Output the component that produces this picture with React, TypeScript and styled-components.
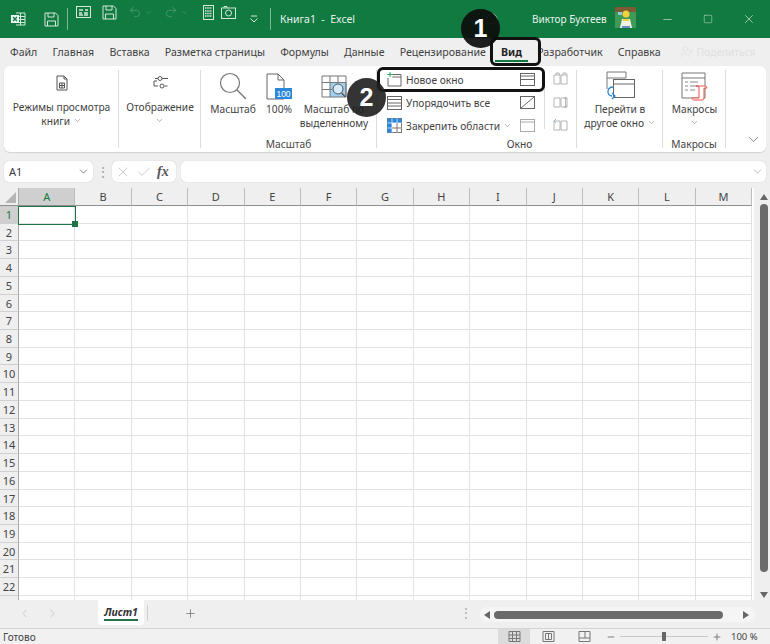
import React from 'react';
import styled, { createGlobalStyle } from 'styled-components';
import { ChevronDown, ChevronLeft, ChevronRight, Check, Minus, Plus, Redo2, Search, Square, Undo2, UserPlus, X } from 'lucide-react';

const GlobalStyle = createGlobalStyle`
  html, body { margin: 0; padding: 0; background: #fff; }
  body { font-family: "Noto Sans", "Open Sans", sans-serif; color: #3a3a3a; }
`;

const GREEN = '#107a41';
const COLUMNS = ['A', 'B', 'C', 'D', 'E', 'F', 'G', 'H', 'I', 'J', 'K', 'L', 'M'];
const ROWS = Array.from({ length: 23 }, (_, i) => i + 1);
const LAST_LABELLED_ROW = 22;
const TABS = ['Файл', 'Главная', 'Вставка', 'Разметка страницы', 'Формулы', 'Данные', 'Рецензирование', 'Вид', 'Разработчик', 'Справка'];

const TitleIcon: React.FC<{ left: number; raised?: boolean; children: React.ReactNode }> = ({ left, raised, children }) => (
  <TitleSlot $left={left} $raised={raised}>{children}</TitleSlot>
);

const Stroke: React.FC<{ size: number; h?: number; color?: string; children: React.ReactNode }> = ({ size, h, color = '#555', children }) => (
  <svg width={size} height={h ?? size} viewBox={`0 0 ${size} ${h ?? size}`} fill="none" stroke={color} strokeWidth="1">
    {children}
  </svg>
);

const SaveIcon = () => (
  <Stroke size={15} color="#d5e8dc">
    <path d="M1 1h10.500l2.500 2.500V14H1z" />
    <path d="M4 1v4h6V1M3.500 14V9h8v5" />
  </Stroke>
);

const PageIcon = () => (
  <Stroke size={16}>
    <path d="M3 1h7l3 3v11H3z" />
    <path d="M10 1v3h3M5.500 8h5v5h-5zM5.500 10.500h5M8 8v5" />
  </Stroke>
);

const SlidersIcon = () => (
  <Stroke size={17}>
    <circle cx="8" cy="3.500" r="2" />
    <path d="M10 3.500h6M3 3.500h3M2 6v5h4M2 6h3" />
    <circle cx="10" cy="11" r="2" />
    <path d="M12.500 11h3" />
  </Stroke>
);

const ZoomIcon = () => (
  <Stroke size={28} color="#777">
    <circle cx="11" cy="11" r="9.500" strokeWidth="1.200" />
    <path d="M18 18l9 9" strokeWidth="1.400" />
  </Stroke>
);

const HundredIcon = () => (
  <svg width="26" height="27" viewBox="0 0 26 27" fill="none">
    <path d="M1 1h11l6 6v19H1z" stroke="#666" fill="#fff" />
    <path d="M12 1v6h6" stroke="#666" />
    <rect x="9" y="15" width="17" height="11" fill="#2b88d8" />
    <text x="17.500" y="24" fontSize="8.500" fill="#fff" textAnchor="middle" fontFamily="Liberation Sans, sans-serif">100</text>
  </svg>
);

const SelectionZoomIcon = () => (
  <svg width="26" height="23" viewBox="0 0 26 23" fill="none">
    <rect x="9" y="7" width="16" height="15" fill="#9fd0f2" />
    <path d="M1 1h24v21H1zM1 7.500h24M1 14.500h10M9 1v21M17 1v6M25 7v15" stroke="#777" />
    <circle cx="17" cy="14" r="5" stroke="#555" fill="#d6ecfa" />
    <path d="M20.500 18l4 4" stroke="#555" strokeWidth="1.400" />
  </svg>
);

const NewWindowIcon = () => (
  <Stroke size={15} color="#666">
    <path d="M5.500 2.500H14V14H1V6" />
    <path d="M5.500 5H14" />
    <path d="M3 0v5M.5 2.500h5" stroke="#22a35a" />
  </Stroke>
);

const ArrangeIcon = () => (
  <Stroke size={15} color="#666">
    <rect x=".5" y="1.500" width="14" height="13" />
    <path d="M.5 4.500h14M.5 8h14M.5 11h14" />
  </Stroke>
);

const FreezeIcon = () => (
  <svg width="15" height="15" viewBox="0 0 15 15" fill="none">
    <rect x=".5" y=".5" width="14" height="14" stroke="#777" />
    <rect x=".5" y=".5" width="14" height="4.500" fill="#2b88d8" />
    <rect x=".5" y="5" width="4.500" height="9.500" fill="#2b88d8" />
    <path d="M.5 5h14M.5 10h14M5 .5v14M10 .5v14" stroke="#fff" strokeWidth=".7" />
    <path d="M10 5v9.500M5 10h9.500" stroke="#777" />
  </svg>
);

const SplitIcon = () => (
  <Stroke size={15} color="#666">
    <rect x=".5" y="1.500" width="14" height="12" />
    <path d="M.5 7.500h14M.5 4h14" />
  </Stroke>
);

const HideIcon = () => (
  <Stroke size={15} color="#666">
    <rect x=".5" y="1.500" width="14" height="12" />
    <path d="M1 13l13-11" />
  </Stroke>
);

const UnhideIcon = () => (
  <Stroke size={15} color="#aaa">
    <rect x=".5" y="1.500" width="14" height="12" />
    <path d="M.5 4h14" />
  </Stroke>
);

const CompareIcon = ({ variant }: { variant: number }) => (
  <Stroke size={15} color="#b5b5b5">
    <path d="M1 3h6v9H1zM8 3h6v9H8z" />
    {variant === 1 && <path d="M3 3V1h3l1 2M10 3V1h3l1 2" />}
    {variant === 2 && <path d="M12.500 2v11M11 4l1.500-2L14 4M11 11l1.500 2 1.500-2" />}
    {variant === 3 && <path d="M3 1L1 3l2 2" stroke="#8fb5d0" />}
  </Stroke>
);

const SwitchWindowIcon = () => (
  <svg width="32" height="30" viewBox="0 0 32 30" fill="none">
    <path d="M3 1h19v6H3zM3 7v11" stroke="#777" />
    <rect x="9.500" y="8.500" width="21" height="18" stroke="#666" fill="#fff" />
    <path d="M9.500 13h21" stroke="#666" />
    <path d="M9 16c-6 0-7 8-1 9" stroke="#2b88d8" strokeWidth="1.300" />
    <path d="M8 22l3 3-3 3" stroke="#2b88d8" strokeWidth="1.300" />
  </svg>
);

const MacroIcon = () => (
  <svg width="27" height="29" viewBox="0 0 27 29" fill="none">
    <path d="M1 1h23v25H1zM1 6h23" stroke="#777" />
    <path d="M4 10h3M9 10h8M4 14h3M9 14h8M4 18h3M9 18h5" stroke="#8a8a8a" />
    <path d="M15 14h9a2 2 0 0 1 2 2h-3v10a2 2 0 0 1-2 2h-8c-1 0-2-1-2-2h7V15z" stroke="#e8534a" fill="#fff" />
  </svg>
);

const Avatar = () => (
  <svg width="21" height="21" viewBox="0 0 21 21">
    <rect width="21" height="21" fill="#3f9a58" />
    <rect width="21" height="5" fill="#7d5a35" />
    <rect x="3" y="5" width="4" height="3" fill="#8fc7e0" />
    <circle cx="11" cy="7" r="3.500" fill="#f2d23c" />
    <path d="M5 21l2-9h8l2 9z" fill="#f3f1e4" />
    <path d="M8 12h6v2H8z" fill="#f2d23c" />
    <path d="M7 19h8v2H7z" fill="#6b8fc4" />
  </svg>
);

const TriBox = () => (
  <svg width="11" height="11" viewBox="0 0 11 11"><path d="M11 0v11H0z" fill="#b5b5b5" /></svg>
);

const Caret = ({ size = 9 }: { size?: number }) => <ChevronDown size={size} color="#777" strokeWidth={1.500} />;

export default function App() {
  return (
    <Page>
      <GlobalStyle />

      <TitleBar>
        <TitleIcon left={10}>
          <svg width="16" height="16" viewBox="0 0 16 16" fill="none">
            <path d="M6 2h9v12H6" stroke="#d5e8dc" />
            <path d="M6 5.500h9M6 8.500h9M6 11.500h9M10.500 2v12" stroke="#d5e8dc" />
            <rect x="1" y="4" width="8" height="8" fill="#eef6f1" />
            <path d="M3 6l4 4M7 6l-4 4" stroke={GREEN} strokeWidth="1.300" />
          </svg>
        </TitleIcon>
        <TitleIcon left={18}><SaveIcon /></TitleIcon>
        <TitleDivider $left={8} />
        <TitleIcon left={8} raised>
          <Stroke size={15} color="#d5e8dc">
            <rect x=".5" y="1.500" width="14" height="11" />
            <path d="M3 5h4M9 5h3M3 8h3M8 8h4M3 10h4M8 10h4" strokeWidth="1.300" />
          </Stroke>
        </TitleIcon>
        <TitleIcon left={11} raised><SaveIcon /></TitleIcon>
        <TitleIcon left={11} raised><Undo2 size={14} color="#5d9f7c" strokeWidth={1.200} /></TitleIcon>
        <MiniCaret><ChevronDown size={7} color="#5d9f7c" /></MiniCaret>
        <TitleIcon left={12} raised><Redo2 size={14} color="#5d9f7c" strokeWidth={1.200} /></TitleIcon>
        <MiniCaret><ChevronDown size={7} color="#5d9f7c" /></MiniCaret>
        <TitleIcon left={15} raised>
          <Stroke size={11} h={15} color="#d5e8dc">
            <rect x=".5" y=".5" width="10" height="14" />
            <path d="M2 3h7M2 6h7M2 8.500h7M2 11h7" strokeWidth="1.300" strokeDasharray="1.500 .7" />
          </Stroke>
        </TitleIcon>
        <TitleIcon left={7} raised>
          <Stroke size={15} h={13} color="#d5e8dc">
            <rect x=".5" y="2" width="14" height="10.500" />
            <path d="M3 2V.5h3V2" />
            <circle cx="7.500" cy="7" r="3" />
          </Stroke>
        </TitleIcon>
        <TitleIcon left={13}>
          <Stroke size={10} h={8} color="#d5e8dc"><path d="M2 1h6M1.500 3.500L5 7l3.500-3.500" /></Stroke>
        </TitleIcon>
        <TitleDivider $left={11} />
        <DocTitle>Книга1&nbsp; -&nbsp; Excel</DocTitle>
        <TitleSearch><Search size={15} color="#d5e8dc" strokeWidth={1.200} /></TitleSearch>
        <UserName>Виктор Бухтеев</UserName>
        <AvatarSlot><Avatar /></AvatarSlot>
        <WindowButton><Minus size={13} color="#e4f0e9" strokeWidth={1.100} /></WindowButton>
        <WindowButton><Square size={10} color="#e4f0e9" strokeWidth={1.100} /></WindowButton>
        <WindowButton><X size={14} color="#e4f0e9" strokeWidth={1.100} /></WindowButton>
      </TitleBar>

      <MenuBar>
        {TABS.map((tab) => (
          <MenuTab key={tab} $active={tab === 'Вид'}>{tab}</MenuTab>
        ))}
        <ShareButton><UserPlus size={14} strokeWidth={1.100} />Поделиться</ShareButton>
      </MenuBar>

      <Ribbon>
        <Group $width={115}>
          <GroupBody>
            <BigButton $width={115}>
              <IconBox $height={26} $below={4}><PageIcon /></IconBox>
              <BigLabel>Режимы просмотра<br />книги <Caret /></BigLabel>
            </BigButton>
          </GroupBody>
        </Group>
        <Group $width={82}>
          <GroupBody>
            <BigButton $width={82}>
              <IconBox $height={26} $below={4}><SlidersIcon /></IconBox>
              <BigLabel>Отображение<br /><Caret /></BigLabel>
            </BigButton>
          </GroupBody>
        </Group>
        <Group $width={176}>
          <GroupBody>
            <BigButton $width={64}>
              <IconBox $height={32}><ZoomIcon /></IconBox>
              <BigLabel>Масштаб</BigLabel>
            </BigButton>
            <BigButton $width={28}>
              <IconBox $height={32}><HundredIcon /></IconBox>
              <BigLabel>100%</BigLabel>
            </BigButton>
            <BigButton $width={82}>
              <IconBox $height={32}><SelectionZoomIcon /></IconBox>
              <BigLabel>Масштаб по<br />выделенному</BigLabel>
            </BigButton>
          </GroupBody>
          <GroupLabel>Масштаб</GroupLabel>
        </Group>
        <Group $width={200}>
          <GroupBody>
            <WindowList>
              <WindowRow><NewWindowIcon /><RowText>Новое окно</RowText><RowSide><SplitIcon /></RowSide></WindowRow>
              <WindowRow><ArrangeIcon /><RowText>Упорядочить все</RowText><RowSide><HideIcon /></RowSide></WindowRow>
              <WindowRow><FreezeIcon /><RowText>Закрепить области <Caret /></RowText><RowSide><UnhideIcon /></RowSide></WindowRow>
            </WindowList>
            <CompareColumn>
              <CompareIcon variant={1} />
              <CompareIcon variant={2} />
              <CompareIcon variant={3} />
            </CompareColumn>
          </GroupBody>
          <GroupLabel $shift={86}>Окно</GroupLabel>
        </Group>
        <Group $width={86}>
          <GroupBody>
            <BigButton $width={86}>
              <IconBox $height={32}><SwitchWindowIcon /></IconBox>
              <BigLabel>Перейти в<br />другое окно <Caret /></BigLabel>
            </BigButton>
          </GroupBody>
        </Group>
        <Group $width={63}>
          <GroupBody>
            <BigButton $width={63}>
              <IconBox $height={32}><MacroIcon /></IconBox>
              <BigLabel>Макросы<br /><Caret /></BigLabel>
            </BigButton>
          </GroupBody>
          <GroupLabel>Макросы</GroupLabel>
        </Group>
        <Collapse><ChevronDown size={17} color="#666" strokeWidth={1.100} /></Collapse>
      </Ribbon>

      <FormulaBar>
        <NameBox>A1<ChevronDown size={13} color="#666" strokeWidth={1.500} /></NameBox>
        <Grip>⋮</Grip>
        <FormulaTools>
          <X size={16} color="#c2c2c2" strokeWidth={1.200} />
          <Check size={16} color="#c2c2c2" strokeWidth={1.200} />
          <FxMark>fx</FxMark>
        </FormulaTools>
        <FormulaInput><ChevronDown size={13} color="#aaa" strokeWidth={1.500} /></FormulaInput>
      </FormulaBar>

      <SheetArea>
        <Sheet>
          <Corner><TriBox /></Corner>
          {COLUMNS.map((col) => (
            <ColHead key={col} $selected={col === 'A'}>{col}</ColHead>
          ))}
          {ROWS.map((row) => (
            <React.Fragment key={row}>
              <RowHead $selected={row === 1}>{row <= LAST_LABELLED_ROW ? row : ''}</RowHead>
              {COLUMNS.map((col) => (
                <Cell key={col} />
              ))}
            </React.Fragment>
          ))}
          <ActiveCell />
        </Sheet>
        <VScroll>
          <ScrollArrowUp />
          <VThumb />
          <ScrollArrowDown />
        </VScroll>
      </SheetArea>

      <TabsBar>
        <NavArrows>
          <ChevronLeft size={13} color="#bbb" strokeWidth={1.300} />
          <ChevronRight size={13} color="#bbb" strokeWidth={1.300} />
        </NavArrows>
        <SheetTab><SheetName>Лист1</SheetName></SheetTab>
        <TabDivider />
        <AddSheet><Plus size={13} color="#666" strokeWidth={1.300} /></AddSheet>
        <TabGrip>⋮</TabGrip>
        <HScroll>
          <HArrowLeft />
          <HThumb />
          <HArrowRight />
        </HScroll>
      </TabsBar>

      <StatusBar>
        <StatusText>Готово</StatusText>
        <ViewButton $active>
          <Stroke size={13} color="#777"><path d="M1 1.500h11v10H1zM1 5h11M1 8.500h11M4.500 1.500v10M8.500 1.500v10" /></Stroke>
        </ViewButton>
        <ViewButton>
          <Stroke size={13} color="#777"><path d="M1 1.500h11v10H1z" /><path d="M3.500 3.500h6v6h-6zM6.500 3.500v6" /></Stroke>
        </ViewButton>
        <ViewButton>
          <Stroke size={13} color="#777"><path d="M1 1.500h11v10H1zM1 8h6V1.500M7 8h5" /></Stroke>
        </ViewButton>
        <ZoomControls>
          <Minus size={10} color="#666" />
          <ZoomTrack><ZoomThumb /></ZoomTrack>
          <Plus size={10} color="#666" />
        </ZoomControls>
        <ZoomValue>100 %</ZoomValue>
      </StatusBar>

      <CalloutBox $x={490} $y={37} $w={51} $h={29} />
      <CalloutBox $x={377} $y={67} $w={168} $h={25} />
      <Badge $x={461} $y={9} $tone="rgba(12, 12, 12, 0.92)">1</Badge>
      <Badge $x={347} $y={78} $tone="rgba(30, 30, 30, 0.9)">2</Badge>
    </Page>
  );
}

const Page = styled.div`
  position: relative;
  width: 770px;
  height: 644px;
  overflow: hidden;
  display: flex;
  flex-direction: column;
  background: #efefef;
`;

const TitleBar = styled.header`
  height: 38px;
  flex: none;
  background: ${GREEN};
  display: flex;
  align-items: center;
  color: #e8f2ec;
  font-size: 10.5px;
`;

const TitleSlot = styled.span<{ $left: number; $raised?: boolean }>`
  display: flex;
  margin-left: ${(p) => p.$left}px;
  margin-bottom: ${(p) => (p.$raised ? 14 : 0)}px;
`;

const MiniCaret = styled.span`
  display: flex;
  margin: 0 0 14px 3px;
`;

const TitleDivider = styled.span<{ $left: number }>`
  width: 1px;
  height: 22px;
  margin-left: ${(p) => p.$left}px;
  background: #7fb59a;
`;

const DocTitle = styled.span`
  width: 72px;
  flex: none;
  margin-left: 9px;
  white-space: nowrap;
`;

const TitleSearch = styled.span`
  display: flex;
  margin-left: 133px;
`;

const UserName = styled.span`
  width: 74px;
  flex: none;
  margin-left: 32px;
  font-size: 10px;
  white-space: nowrap;
`;

const AvatarSlot = styled.span`
  display: flex;
  margin-left: 9px;
  margin-bottom: 3px;
`;

const WindowButton = styled.span`
  width: 42px;
  display: flex;
  justify-content: center;
  &:nth-last-child(3) { margin-left: 11px; }
`;

const MenuBar = styled.nav`
  height: 28px;
  flex: none;
  display: flex;
  align-items: center;
  gap: 15.2px;
  padding-left: 10px;
  font-size: 10.6px;
`;

const MenuTab = styled.span<{ $active?: boolean }>`
  position: relative;
  white-space: nowrap;
  font-weight: ${(p) => (p.$active ? 700 : 400)};
  color: ${(p) => (p.$active ? '#222' : '#3f3f3f')};
  &::after {
    content: '';
    display: ${(p) => (p.$active ? 'block' : 'none')};
    position: absolute;
    left: -6px;
    right: -6px;
    bottom: -3px;
    height: 2px;
    background: ${GREEN};
  }
`;

const ShareButton = styled.span`
  display: flex;
  align-items: center;
  gap: 3px;
  margin-left: 4px;
  color: #dfdfdf;
  white-space: nowrap;
  font-size: 10.2px;
`;

const Ribbon = styled.section`
  height: 86px;
  flex: none;
  margin: 0 4px;
  padding: 4px 0;
  box-sizing: border-box;
  background: #fff;
  border-radius: 6px;
  box-shadow: 0 1px 1px rgba(0, 0, 0, 0.12);
  display: flex;
`;

const Group = styled.div<{ $width: number }>`
  width: ${(p) => p.$width}px;
  flex: none;
  box-sizing: border-box;
  border-right: 1px solid #dcdcdc;
  display: flex;
  flex-direction: column;
  align-items: center;
`;

const GroupBody = styled.div`
  flex: 1;
  width: 100%;
  display: flex;
  min-height: 0;
`;

const GroupLabel = styled.div<{ $shift?: number }>`
  font-size: 10.2px;
  line-height: 14px;
  height: 14px;
  margin-bottom: -3px;
  padding-left: ${(p) => p.$shift ?? 0}px;
  color: #444;
`;

const BigButton = styled.div<{ $width: number }>`
  width: ${(p) => p.$width}px;
  flex: none;
  display: flex;
  flex-direction: column;
  align-items: center;
`;

const IconBox = styled.div<{ $height: number; $below?: number }>`
  height: ${(p) => p.$height}px;
  margin-bottom: ${(p) => p.$below ?? 0}px;
  display: flex;
  align-items: center;
  justify-content: center;
  flex: none;
`;

const BigLabel = styled.div`
  font-size: 10.2px;
  line-height: 14px;
  text-align: center;
  white-space: nowrap;
  color: #3f3f3f;
`;

const WindowList = styled.div`
  width: 168px;
  flex: none;
  display: flex;
  flex-direction: column;
  gap: 8px;
  padding: 2px 0 0 10px;
  box-sizing: border-box;
  border-right: 1px solid #dcdcdc;
  margin-bottom: 8px;
`;

const WindowRow = styled.div`
  height: 16px;
  display: flex;
  align-items: center;
  font-size: 10.2px;
  color: #3f3f3f;
`;

const RowText = styled.span`
  margin-left: 4px;
  flex: 1;
  white-space: nowrap;
`;

const RowSide = styled.span`
  display: flex;
  margin-right: 9px;
`;

const CompareColumn = styled.div`
  display: flex;
  flex-direction: column;
  gap: 8px;
  padding: 2px 0 0 8px;
`;

const Collapse = styled.div`
  flex: 1;
  display: flex;
  align-items: flex-end;
  justify-content: flex-end;
  padding-right: 4px;
`;

const FormulaBar = styled.div`
  height: 36px;
  flex: none;
  display: flex;
  align-items: center;
  padding: 3px 4px 0;
  box-sizing: border-box;
`;

const WhiteBox = styled.div`
  height: 21px;
  background: #fff;
  border-radius: 5px;
  box-shadow: 0 0 1px rgba(0, 0, 0, 0.25);
  display: flex;
  align-items: center;
`;

const NameBox = styled(WhiteBox)`
  width: 89px;
  flex: none;
  box-sizing: border-box;
  padding: 0 3px 0 5px;
  justify-content: space-between;
  font-size: 11px;
`;

const Grip = styled.span`
  width: 19px;
  flex: none;
  text-align: center;
  color: #999;
  font-size: 12px;
`;

const FormulaTools = styled(WhiteBox)`
  width: 64px;
  flex: none;
  box-sizing: border-box;
  padding-left: 3px;
  gap: 5px;
`;

const FxMark = styled.span`
  font-family: "Liberation Serif", serif;
  font-style: italic;
  font-weight: 700;
  font-size: 14px;
  color: #555;
`;

const FormulaInput = styled(WhiteBox)`
  flex: 1;
  margin-left: 5px;
  justify-content: flex-end;
  padding-right: 2px;
`;

const SheetArea = styled.div`
  height: 412px;
  flex: none;
  display: flex;
  overflow: hidden;
`;

const Sheet = styled.div`
  position: relative;
  width: 754px;
  flex: none;
  display: grid;
  grid-template-columns: 19px repeat(13, 56.4px);
  grid-template-rows: 18px;
  grid-auto-rows: 17.72px;
  align-content: start;
  background: #fff;
  overflow: hidden;
`;

const Corner = styled.div`
  background: #efefef;
  border-right: 1px solid #a8a8a8;
  border-bottom: 1px solid #8f8f8f;
  box-sizing: border-box;
  display: flex;
  align-items: flex-end;
  justify-content: flex-end;
  padding: 0 2px 2px 0;
`;

const ColHead = styled.div<{ $selected?: boolean }>`
  background: ${(p) => (p.$selected ? '#cfcfcf' : '#efefef')};
  color: ${(p) => (p.$selected ? GREEN : '#444')};
  border-right: 1px solid #bdbdbd;
  border-bottom: 1px solid #8f8f8f;
  box-sizing: border-box;
  font-size: 11px;
  line-height: 17px;
  text-align: center;
`;

const RowHead = styled.div<{ $selected?: boolean }>`
  background: ${(p) => (p.$selected ? '#cfcfcf' : '#efefef')};
  color: ${(p) => (p.$selected ? GREEN : '#444')};
  border-right: 1px solid #a8a8a8;
  border-bottom: 1px solid #d0d0d0;
  box-sizing: border-box;
  font-size: 11px;
  line-height: 18px;
  text-align: center;
`;

const Cell = styled.div`
  border-right: 1px solid #e2e2e2;
  border-bottom: 1px solid #e2e2e2;
  box-sizing: border-box;
`;

const ActiveCell = styled.div`
  position: absolute;
  left: 18px;
  top: 18px;
  width: 58px;
  height: 18.500px;
  box-sizing: border-box;
  border: 1.500px solid #217346;
  &::after {
    content: '';
    position: absolute;
    right: -3px;
    bottom: -3px;
    width: 6px;
    height: 6px;
    background: #217346;
    box-sizing: border-box;
  }
`;

const VScroll = styled.div`
  flex: 1;
  display: flex;
  flex-direction: column;
  align-items: center;
  padding-left: 4px;
  padding-top: 6px;
  box-sizing: border-box;
`;

const ScrollArrowUp = styled.span`
  width: 0;
  height: 0;
  border-left: 4px solid transparent;
  border-right: 4px solid transparent;
  border-bottom: 6px solid #666;
`;

const ScrollArrowDown = styled.span`
  width: 0;
  height: 0;
  margin-top: 20px;
  border-left: 4px solid transparent;
  border-right: 4px solid transparent;
  border-top: 6px solid #666;
`;

const VThumb = styled.span`
  width: 8px;
  height: 368px;
  margin-top: 4px;
  border-radius: 4px;
  background: #6b6b6b;
`;

const TabsBar = styled.div`
  height: 28px;
  flex: none;
  display: flex;
  align-items: flex-start;
  border-bottom: 1px solid #d4d4d4;
  box-sizing: content-box;
`;

const NavArrows = styled.div`
  width: 98px;
  height: 26px;
  flex: none;
  box-sizing: border-box;
  padding: 0 39px 0 18px;
  display: flex;
  align-items: center;
  justify-content: space-between;
`;

const SheetTab = styled.div`
  width: 46px;
  height: 25px;
  flex: none;
  background: #fff;
  border-radius: 0 0 4px 4px;
  display: flex;
  align-items: center;
  justify-content: center;
`;

const SheetName = styled.span`
  font-size: 10.5px;
  font-weight: 700;
  font-style: italic;
  color: #333;
  line-height: 14px;
  border-bottom: 2px solid #217346;
`;

const TabDivider = styled.span`
  width: 1px;
  height: 16px;
  margin: 5px 0 0 3px;
  background: #cfcfcf;
  flex: none;
`;

const AddSheet = styled.span`
  display: flex;
  margin: 7px 0 0 36px;
  flex: none;
`;

const TabGrip = styled.span`
  margin: 4px 0 0 263px;
  color: #aaa;
  font-size: 12px;
  flex: none;
`;

const HScroll = styled.div`
  width: 276px;
  height: 15px;
  margin: 7px 0 0 8px;
  flex: none;
  border-radius: 8px;
  background: #f5f5f5;
  display: flex;
  align-items: center;
  padding: 0 4px;
  box-sizing: border-box;
`;

const HArrowLeft = styled.span`
  border-top: 4px solid transparent;
  border-bottom: 4px solid transparent;
  border-right: 6px solid #666;
`;

const HArrowRight = styled.span`
  margin-left: 20px;
  border-top: 4px solid transparent;
  border-bottom: 4px solid transparent;
  border-left: 6px solid #666;
`;

const HThumb = styled.span`
  width: 229px;
  height: 8px;
  margin-left: 4px;
  border-radius: 4px;
  background: #6b6b6b;
`;

const StatusBar = styled.footer`
  flex: 1;
  display: flex;
  align-items: center;
  font-size: 10px;
  background: #f1f1f1;
`;

const StatusText = styled.span`
  margin-left: 3px;
  width: 495px;
  color: #444;
`;

const ViewButton = styled.span<{ $active?: boolean }>`
  width: ${(p) => (p.$active ? 32 : 36)}px;
  align-self: stretch;
  display: flex;
  align-items: center;
  justify-content: center;
  background: ${(p) => (p.$active ? '#dcdcdc' : 'transparent')};
`;

const ZoomControls = styled.div`
  margin-left: 4px;
  display: flex;
  align-items: center;
  gap: 4px;
`;

const ZoomTrack = styled.span`
  position: relative;
  width: 88px;
  height: 1px;
  background: #c8c8c8;
`;

const ZoomThumb = styled.span`
  position: absolute;
  left: 42px;
  top: -4px;
  width: 4px;
  height: 9px;
  background: #666;
`;

const ZoomValue = styled.span`
  margin-left: 9px;
  font-size: 9.5px;
  color: #444;
  white-space: nowrap;
`;

const CalloutBox = styled.div<{ $x: number; $y: number; $w: number; $h: number }>`
  position: absolute;
  left: ${(p) => p.$x}px;
  top: ${(p) => p.$y}px;
  width: ${(p) => p.$w}px;
  height: ${(p) => p.$h}px;
  box-sizing: border-box;
  border: 3px solid #111;
  border-radius: 6px;
`;

const Badge = styled.div<{ $x: number; $y: number; $tone: string }>`
  position: absolute;
  left: ${(p) => p.$x}px;
  top: ${(p) => p.$y}px;
  width: 39px;
  height: 39px;
  border-radius: 50%;
  background: ${(p) => p.$tone};
  color: #fff;
  font-family: "Liberation Sans", sans-serif;
  font-weight: 700;
  font-size: 25px;
  line-height: 39px;
  text-align: center;
`;
